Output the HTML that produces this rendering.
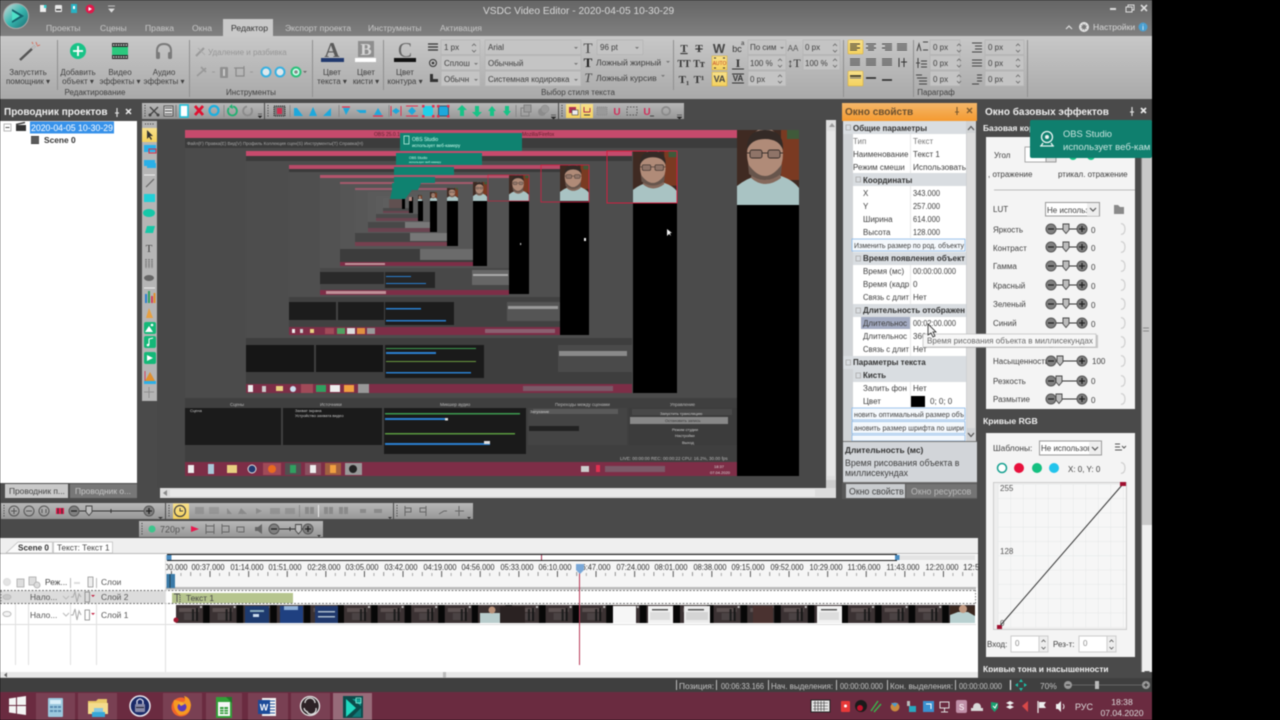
<!DOCTYPE html>
<html lang="ru"><head><meta charset="utf-8"><title>VSDC Video Editor</title>
<style>
html,body{margin:0;padding:0;background:#000;width:1280px;height:720px;overflow:hidden}
svg{display:block;filter:blur(.45px)}
text{font-family:"Liberation Sans","Noto Sans CJK SC",sans-serif;font-size:8px;fill:#3f3f3f}
.c{text-anchor:middle}
.b{font-weight:bold}
.w{fill:#f2f2f2}
.h{font-size:10px;font-weight:bold;fill:#eee}
.n{fill:#555}
.g{fill:#8d8d8d}
.s{font-size:8px;fill:#555}
.tl{font-size:8.6px;fill:#333;text-anchor:middle}
.st{font-size:8.4px;fill:#c4c4c4}
.box{fill:#c4c4c4;stroke:#b2b2b2;stroke-width:.7}
.sep{stroke:#8f8f8f;stroke-width:1}
.tbg{fill:url(#tb)}
</style></head><body>
<svg width="1280" height="720" viewBox="0 0 1280 720" xmlns="http://www.w3.org/2000/svg">
<defs>
<linearGradient id="title" x1="0" y1="0" x2="0" y2="1"><stop offset="0" stop-color="#656565"/><stop offset="1" stop-color="#808080"/></linearGradient>
<linearGradient id="rib" x1="0" y1="0" x2="0" y2="1"><stop offset="0" stop-color="#c8c8c8"/><stop offset="1" stop-color="#a9a9a9"/></linearGradient>
<linearGradient id="tb" x1="0" y1="0" x2="0" y2="1"><stop offset="0" stop-color="#b8b8b8"/><stop offset="1" stop-color="#979797"/></linearGradient>
<linearGradient id="org" x1="0" y1="0" x2="0" y2="1"><stop offset="0" stop-color="#f4b76a"/><stop offset="1" stop-color="#f59a30"/></linearGradient>
<linearGradient id="ylw" x1="0" y1="0" x2="0" y2="1"><stop offset="0" stop-color="#f8e08a"/><stop offset="1" stop-color="#f5d25e"/></linearGradient>
<linearGradient id="logo" x1="0" y1="0" x2="1" y2="1"><stop offset="0" stop-color="#d8d8d8"/><stop offset=".5" stop-color="#38b8b0"/><stop offset="1" stop-color="#1a6a70"/></linearGradient>
<pattern id="tick" patternUnits="userSpaceOnUse" x="171" y="571" width="38.6" height="8">
<rect x="0" y="0" width=".8" height="6" fill="#333"/><rect x="9.6" y="2" width=".7" height="3" fill="#888"/><rect x="19.3" y="1" width=".7" height="4" fill="#666"/><rect x="29" y="2" width=".7" height="3" fill="#888"/></pattern>
<pattern id="thumb" patternUnits="userSpaceOnUse" x="176" y="605" width="33.6" height="18">
<rect width="33.6" height="18" fill="#3b3233"/><rect x="3" y="3" width="20" height="4" fill="#5b5050"/><rect x="8" y="8" width="14" height="7" fill="#4b4344"/><rect x="16" y="4" width="2" height="12" fill="#1b1b1b"/><rect x="20" y="3" width="2" height="13" fill="#151515"/><rect x="27" y="0" width="6.6" height="18" fill="#070707"/><rect x="24" y="1" width="2" height="2" fill="#bbb"/></pattern>
<pattern id="grid" patternUnits="userSpaceOnUse" x="998" y="484" width="12.5" height="14.3"><rect width="12.5" height="14.3" fill="#f6f6f6"/><path d="M0 0V14.3M0 0H12.5" stroke="#dfe3e3" stroke-width=".7"/></pattern>

<symbol id="cam" viewBox="0 0 62 75" preserveAspectRatio="none">
<rect width="62" height="75" fill="#3f2a22"/><rect x="44" width="18" height="50" fill="#7a3a22"/><rect x="50" y="0" width="12" height="9" fill="#3f5a3a"/>
<path d="M0 75V56Q10 48 20 46L44 46Q56 50 62 58V75Z" fill="#a9c3c3"/>
<path d="M14 48Q28 60 44 48L42 36H16Z" fill="#85695c"/>
<ellipse cx="28" cy="24" rx="18" ry="26" fill="#b08b78"/>
<path d="M10 20Q9 0 28 0Q47 0 46 20Q42 9 28 9Q14 9 10 20Z" fill="#342a26"/>
<path d="M11 34Q28 58 45 34L44 44Q28 56 12 44Z" fill="#67554c"/>
<path d="M10 23H46" stroke="#3a302c" stroke-width=".9"/><rect x="13" y="20" width="12" height="8" rx="2" fill="#8f7468" stroke="#3a302c" stroke-width=".9"/><rect x="31" y="20" width="12" height="8" rx="2" fill="#8f7468" stroke="#3a302c" stroke-width=".9"/>
</symbol>

<symbol id="sld" viewBox="0 0 44 14" overflow="visible">
<path d="M7 7H38" stroke="#333" stroke-width="1"/>
<circle cx="6" cy="7" r="5" fill="#808080" stroke="#555"/><path d="M3 7H9" stroke="#222" stroke-width="1.3"/>
<circle cx="37" cy="7" r="5" fill="#808080" stroke="#555"/><path d="M34 7H40M37 4V10" stroke="#222" stroke-width="1.3"/>
</symbol>
<symbol id="th" viewBox="0 0 8 11"><path d="M1 1H7V7L4 10.500L1 7Z" fill="#bdbdbd" stroke="#444" stroke-width=".9"/></symbol>
<symbol id="ring" viewBox="0 0 10 14"><path d="M4 1.500Q8 2 8 7Q8 12 4 12.500" fill="none" stroke="#cfcfcf" stroke-width="1.200"/></symbol>
</defs>

<!-- base -->
<rect width="1152" height="720" fill="#4a4a4a"/>
<rect width="1152" height="36" fill="url(#title)"/>
<rect y="36" width="1152" height="63" fill="url(#rib)"/>

<!-- logo & QAT -->
<circle cx="16" cy="16" r="12.500" fill="url(#logo)" stroke="#aaa"/>
<path d="M12 9L24 16L12 23Z" fill="#14606a"/><path d="M12 11L20 16L12 21Z" fill="#4fe0c8"/>
<rect x="40" y="5" width="6" height="7" fill="#eee"/><rect x="44" y="5" width="2.500" height="3" fill="#3cc"/>
<rect x="55" y="5" width="7" height="7" rx="1" fill="#e8e8e8"/><rect x="56" y="9" width="5" height="1.500" fill="#444"/>
<rect x="71" y="4" width="6" height="9" fill="#27b3c4"/><rect x="73" y="6" width="2" height="3" fill="#fff"/>
<circle cx="90" cy="9" r="4.500" fill="#e0184a"/><path d="M88.500 7L92 9L88.500 11Z" fill="#fff"/>
<path d="M108 6H115M109 9H114L111.500 12Z" stroke="#ddd" fill="#ddd" stroke-width=".8"/>

<!-- tabs -->
<rect x="223" y="19" width="50" height="17" fill="#c9c9c9"/>
<text x="46" y="31" style="fill:#c8c8c8;font-size:8.600px">Проекты</text>
<text x="100" y="31" style="fill:#c8c8c8;font-size:8.600px">Сцены</text>
<text x="145" y="31" style="fill:#c8c8c8;font-size:8.600px">Правка</text>
<text x="192" y="31" style="fill:#c8c8c8;font-size:8.600px">Окна</text>
<text x="231" y="31" style="fill:#333;font-size:8.600px">Редактор</text>
<text x="285" y="31" style="fill:#c8c8c8;font-size:8.600px">Экспорт проекта</text>
<text x="368" y="31" style="fill:#c8c8c8;font-size:8.600px">Инструменты</text>
<text x="440" y="31" style="fill:#c8c8c8;font-size:8.600px">Активация</text>
<text x="483" y="14" style="fill:#d8d8d8;font-size:10.200px">VSDC Video Editor - 2020-04-05 10-30-29</text>
<!-- window ctrls -->
<path d="M1110 9H1116" stroke="#ddd" stroke-width="2"/>
<path d="M1126 7H1132V12H1126Z M1128 7V5H1134V10H1132" fill="none" stroke="#ddd"/>
<path d="M1141 5L1147 11M1147 5L1141 11" stroke="#ddd" stroke-width="1.600"/>
<path d="M1066 29L1069 26L1072 29" fill="none" stroke="#ddd" stroke-width="1.200"/>
<circle cx="1084" cy="27" r="3.500" fill="none" stroke="#e4e4e4" stroke-width="2.500" stroke-dasharray="1.800 .8"/>
<circle cx="1084" cy="27" r="4.200" fill="none" stroke="#e4e4e4" stroke-width="1.500"/>
<text x="1093" y="30" style="fill:#d8d8d8;font-size:8.600px">Настройки</text>
<circle cx="1143" cy="27" r="4.500" fill="#4a9fd0"/><text x="1143" y="30" class="c" style="fill:#fff;font-size:7px">i</text>

<!-- ribbon left -->
<path d="M20 60L35 46" stroke="#555" stroke-width="2.500"/><path d="M32 49L35 46" stroke="#bbb" stroke-width="2.500"/>
<path d="M36 42L37 45M40 45L37 46M32 42L33 44" stroke="#d07060" stroke-width="1"/>
<text x="28" y="75" class="c">Запустить</text><text x="28" y="84" class="c">помощник ▾</text>
<path d="M57.500 40V90" class="sep"/>
<circle cx="78" cy="51" r="8" fill="#18c387"/><path d="M73 51H83M78 46V56" stroke="#fff" stroke-width="1.800"/>
<text x="78" y="75" class="c">Добавить</text><text x="78" y="84" class="c">объект ▾</text>
<rect x="112" y="43" width="16" height="16" fill="#2e2e2e"/><rect x="112" y="47" width="16" height="8" fill="#2cc97e"/>
<path d="M113 45H127M113 57H127" stroke="#ccc" stroke-width="1.400" stroke-dasharray="1.500 1"/>
<text x="120" y="75" class="c">Видео</text><text x="120" y="84" class="c">эффекты ▾</text>
<path d="M157 54V51Q157 44 164 44Q171 44 171 51V54" fill="none" stroke="#7a7a7a" stroke-width="2"/>
<rect x="156" y="52" width="4" height="7" rx="1.500" fill="#7a7a7a"/><rect x="168" y="52" width="4" height="7" rx="1.500" fill="#7a7a7a"/>
<text x="164" y="75" class="c">Аудио</text><text x="164" y="84" class="c">эффекты ▾</text>
<text x="95" y="95" class="c">Редактирование</text>
<path d="M189.500 40V97" class="sep"/>

<!-- tools -->
<path d="M196 56L204 48" stroke="#999" stroke-width="2"/><path d="M198 48L205 55" stroke="#aaa"/>
<text x="208" y="55" style="fill:#969696">Удаление и разбивка</text>
<path d="M197 76L206 68M201 67L206 72" stroke="#999" stroke-width="1.800" fill="none"/>
<path d="M212 72H215" stroke="#999"/>
<rect x="220" y="67" width="8" height="11" rx="1" fill="#8f8f8f"/><rect x="223" y="69" width="2" height="7" fill="#ccc"/>
<rect x="236" y="68" width="8" height="8" fill="none" stroke="#888" stroke-width="1.200"/><path d="M234 68H238M244 66V70" stroke="#888"/>
<path d="M250 72H253" stroke="#999"/>
<circle cx="266" cy="72" r="4.500" fill="#dfe8ec" stroke="#38b0e0" stroke-width="2"/>
<circle cx="280" cy="72" r="4.500" fill="#dfe8ec" stroke="#38b0e0" stroke-width="2"/>
<circle cx="296" cy="72" r="4.500" fill="#cfe" stroke="#2cc07a" stroke-width="2"/><circle cx="296" cy="72" r="1.800" fill="#888"/>
<path d="M303 71L305 73L307 71" fill="#666"/>
<text x="251" y="95" class="c">Инструменты</text>
<path d="M312.500 40V97" class="sep"/>

<!-- colours -->
<text x="332" y="57" class="c" style="font-family:'Liberation Serif',serif;font-size:21px;font-weight:bold;fill:#5a5a5a">A</text>
<rect x="321" y="58" width="23" height="4" fill="#21396e"/>
<text x="332" y="75" class="c">Цвет</text><text x="332" y="84" class="c">текста ▾</text>
<rect x="358" y="41" width="16" height="16" fill="#8e8e8e"/>
<text x="366" y="55" class="c" style="font-family:'Liberation Serif',serif;font-size:17px;font-weight:bold;fill:#d4d4d4">B</text>
<rect x="355" y="58" width="21" height="4" fill="#fff"/>
<text x="366" y="75" class="c">Цвет</text><text x="366" y="84" class="c">кисти ▾</text>
<path d="M383.500 40V90" class="sep"/>
<text x="405" y="57" class="c" style="font-family:'Liberation Serif',serif;font-size:21px;fill:#666">C</text>
<rect x="394" y="58" width="22" height="4" fill="#111"/>
<text x="405" y="75" class="c">Цвет</text><text x="405" y="84" class="c">контура ▾</text>

<!-- line boxes -->
<path d="M428 44H438M428 47H438M428 50H438" stroke="#333" stroke-width="1.300"/>
<circle cx="433" cy="63" r="3.500" fill="none" stroke="#333"/><circle cx="433" cy="63" r="1.300" fill="#333"/>
<path d="M430 74V82H438V79H433V74Z" fill="#333"/>
<rect x="441" y="40" width="39" height="14.500" class="box"/><rect x="441" y="55.500" width="39" height="14.500" class="box"/><rect x="441" y="71" width="39" height="15" class="box"/>
<text x="444" y="50">1 px</text><text x="444" y="66">Сплош</text><text x="444" y="82">Обычн</text>
<path d="M472 46L474 44L476 46M472 50L474 52L476 50" fill="none" stroke="#666" stroke-width=".8"/>
<path d="M474 63H478L476 65Z M474 79H478L476 81Z" fill="#777"/>

<rect x="485" y="40" width="96" height="14.500" class="box"/><rect x="485" y="55.500" width="96" height="14.500" class="box"/><rect x="485" y="71" width="96" height="15" class="box"/>
<text x="488" y="50">Arial</text><text x="488" y="66">Обычный</text><text x="488" y="82">Системная кодировка</text>
<path d="M574 47H578L576 49Z M574 63H578L576 65Z M574 79H578L576 81Z" fill="#777"/>

<text x="588" y="53" class="c" style="font-family:'Liberation Serif',serif;font-size:15px;fill:#444">T</text>
<text x="588" y="67" class="c" style="font-family:'Liberation Serif',serif;font-size:13px;font-weight:bold;fill:#222">T</text>
<text x="588" y="82" class="c" style="font-family:'Liberation Serif',serif;font-size:13px;font-style:italic;fill:#444">T</text>
<rect x="597" y="40" width="46" height="14.500" class="box"/>
<text x="600" y="50">96 pt</text><path d="M635 47H639L637 49Z" fill="#777"/>
<text x="596" y="65.500" style="font-size:8.600px">Ложный жирный</text><path d="M666 61H670L668 63Z" fill="#777"/>
<text x="596" y="81" style="font-size:8.600px">Ложный курсив</text><path d="M661 75H665L663 77Z" fill="#777"/>
<text x="578" y="95" class="c">Выбор стиля текста</text>
<path d="M673.500 40V90" class="sep"/>
<text x="684" y="52" class="c" style="font-family:'Liberation Serif',serif;font-size:11px;font-weight:bold;fill:#333;text-decoration:underline">T</text>
<text x="699" y="52" class="c" style="font-family:'Liberation Serif',serif;font-size:11px;font-weight:bold;fill:#333;text-decoration:line-through">T</text>
<text x="684" y="67" class="c" style="font-family:'Liberation Serif',serif;font-size:10px;font-weight:bold;fill:#333">TT</text>
<text x="699" y="67" class="c" style="font-family:'Liberation Serif',serif;font-size:10px;font-weight:bold;fill:#333">Tт</text>
<text x="684" y="83" class="c" style="font-family:'Liberation Serif',serif;font-size:11px;font-weight:bold;fill:#333">T₁</text>
<text x="699" y="83" class="c" style="font-family:'Liberation Serif',serif;font-size:11px;font-weight:bold;fill:#333">T¹</text>
<text x="719" y="53" class="c" style="font-size:13px;font-weight:bold;fill:#444">W</text>
<rect x="712" y="56" width="15" height="14" fill="url(#ylw)" stroke="#d8b040" stroke-width=".6"/>
<text x="719.500" y="65" class="c" style="font-size:5px;fill:#c04020">AUTO</text><path d="M714 58H716M723 58H725M714 68H716M723 68H725" stroke="#333"/>
<rect x="712" y="72" width="15" height="14" fill="url(#ylw)" stroke="#d8b040" stroke-width=".6"/>
<text x="719.500" y="82" class="c" style="font-size:9px;font-weight:bold;fill:#444">VA</text>

<text x="737" y="52" class="c" style="font-size:9px;fill:#333">bc</text><text x="741" y="45" style="font-size:6px;fill:#333">a</text>
<text x="738" y="67" class="c" style="font-family:'Liberation Serif',serif;font-size:12px;font-weight:bold;fill:#333">I</text><path d="M732 69H744" stroke="#333"/>
<text x="738" y="81" class="c" style="font-size:8px;font-weight:bold;fill:#333">VA</text><path d="M732 83H744M732 74H744" stroke="#333"/>
<rect x="748" y="40" width="38" height="14.500" class="box"/><rect x="748" y="55.500" width="38" height="14.500" class="box"/><rect x="748" y="71" width="38" height="15" class="box"/>
<text x="750" y="50">По сим</text><text x="750" y="66">100 %</text><text x="750" y="82">0 px</text>
<path d="M780 47H784L782 49Z" fill="#777"/>
<path d="M778 61L780 59L782 61M778 65L780 67L782 65M778 77L780 75L782 77M778 81L780 83L782 81" fill="none" stroke="#666" stroke-width=".8"/>
<text x="793" y="51" class="c" style="font-size:8px;fill:#555">AA</text>
<text x="794" y="67" class="c" style="font-family:'Liberation Serif',serif;font-size:12px;fill:#333">↕T</text>
<rect x="803" y="40" width="37" height="14.500" class="box"/><rect x="803" y="55.500" width="37" height="14.500" class="box"/>
<text x="805" y="50">0 px</text><text x="805" y="66">100 %</text>
<path d="M833 46L835 44L837 46M833 50L835 52L837 50M833 61L835 59L837 61M833 65L835 67L837 65" fill="none" stroke="#666" stroke-width=".8"/>
<path d="M843.500 40V97" class="sep"/>

<!-- paragraph -->
<rect x="848" y="40" width="15" height="14" rx="1" fill="url(#ylw)" stroke="#d8b040" stroke-width=".6"/>
<rect x="848" y="71" width="15" height="15" rx="1" fill="url(#ylw)" stroke="#d8b040" stroke-width=".6"/>
<path d="M850 44H860M850 46H857M850 48H860M850 50H857" stroke="#333" stroke-width="1"/>
<path d="M866 44H876M868 46H874M866 48H876M868 50H874 M882 44H892M885 46H892M882 48H892M885 50H892 M897 44H907M897 46H907M897 48H907M897 50H907 M850 59H860M850 61H860M850 63H860M850 65H860M866 59H876M866 61H876M866 63H876M866 65H876M882 59H892M882 61H892M882 63H892M882 65H892" stroke="#444" stroke-width="1"/>
<path d="M899 58V67M904 58V67M901 62H907" stroke="#333"/>
<path d="M850 76H861M866 78H876M882 80H892" stroke="#222" stroke-width="1.500"/><path d="M850 78H861" stroke="#777"/>
<path d="M913.500 40V97" class="sep"/>
<path d="M917 51L919 44L921 51M923 42H928M923 50H928" fill="none" stroke="#444"/><path d="M921 67H927M921 64H927M921 61H927M916 63L920 63M918 58V68" stroke="#444" fill="none"/><path d="M917 78H927M919 81H927M919 84H927M916 75H922" stroke="#444"/>
<rect x="930" y="40" width="30" height="14.500" class="box"/><rect x="930" y="55.500" width="30" height="14.500" class="box"/><rect x="930" y="71" width="30" height="15" class="box"/>
<text x="933" y="50">0 px</text><text x="933" y="66">0 px</text><text x="933" y="82">0 px</text>
<path d="M961 46L963 44L965 46M961 50L963 52L965 50M961 61L963 59L965 61M961 65L963 67L965 65M961 77L963 75L965 77M961 81L963 83L965 81" fill="none" stroke="#666" stroke-width=".8" transform="translate(-4 0)"/>
<path d="M972 43H982M975 46H982M975 49H982M972 52H982M972 60H982M972 63H982M972 66H982M977 75H982M977 78H982M977 81H982M972 84H979" stroke="#444"/>
<rect x="985" y="40" width="39" height="14.500" class="box"/><rect x="985" y="55.500" width="39" height="14.500" class="box"/><rect x="985" y="71" width="39" height="15" class="box"/>
<text x="988" y="50">0 px</text><text x="988" y="66">0 px</text><text x="988" y="82">0 px</text>
<path d="M1016 46L1018 44L1020 46M1016 50L1018 52L1020 50M1016 61L1018 59L1020 61M1016 65L1018 67L1020 65M1016 77L1018 75L1020 77M1016 81L1018 83L1020 81" fill="none" stroke="#666" stroke-width=".8"/>
<text x="936" y="95" class="c">Параграф</text>
<path d="M1027.500 40V97" class="sep"/>

<!-- left panel -->
<text x="4" y="115" class="h">Проводник проектов</text>
<path d="M117 108V113M115 113H119M117 113V117" stroke="#ddd" stroke-width="1.200"/>
<path d="M126 109L131 114M131 109L126 114" stroke="#eee" stroke-width="1.500"/>
<rect y="121" width="137" height="362" fill="#fff"/>
<rect x="4" y="124" width="7" height="7" fill="#fff" stroke="#999" stroke-width=".7"/><path d="M5.500 127.500H9.500" stroke="#555"/>
<rect x="16" y="125" width="10" height="6" fill="#333"/><path d="M16 124.500L25 122.500" stroke="#444" stroke-width="1.500"/>
<rect x="30" y="121.500" width="84" height="12" fill="#3792ea"/>
<text x="31" y="131" style="fill:#fff;font-size:9px" textLength="82" lengthAdjust="spacingAndGlyphs">2020-04-05 10-30-29</text>
<rect x="31" y="136" width="8" height="8" fill="#444"/><path d="M31 138H39M31 140H39M31 142H39" stroke="#999" stroke-width=".5"/>
<text x="44" y="143" class="b" style="fill:#333;font-size:8.400px">Scene 0</text>
<rect y="483" width="137" height="17" fill="#4d4d4d"/>
<rect x="5" y="484" width="63" height="14" fill="#c9c9c9"/><text x="9" y="494" style="fill:#444;font-size:8.400px">Проводник п...</text>
<rect x="70" y="484" width="67" height="14" fill="#777"/><text x="75" y="494" style="fill:#c8c8c8;font-size:8.400px">Проводник о...</text>

<!-- vertical toolbar -->
<rect x="142" y="121" width="15" height="280" fill="#b5b5b5"/>
<path d="M145 124H155" stroke="#333" stroke-dasharray="1 1.500"/>
<rect x="142" y="128" width="15" height="14" fill="url(#ylw)"/><path d="M147 130L147 139L149 137L151 140L152 139L150 136H153Z" fill="#333"/>
<rect x="144" y="145" width="12" height="7" fill="#2ab0e8"/><rect x="149" y="149" width="7" height="4" fill="none" stroke="#d0304a"/>
<rect x="144" y="160" width="11" height="6" fill="#2ab0e8"/><rect x="147" y="163" width="9" height="5" fill="#2ab0e8"/>
<path d="M144 175H155" stroke="#eee"/><path d="M146 187L154 179" stroke="#666" stroke-width="1.200"/>
<rect x="144" y="194" width="11" height="8" fill="#22d0d8"/>
<ellipse cx="149" cy="213" rx="6" ry="4" fill="#16c8a8"/>
<path d="M145 233L147 226H155L153 233Z" fill="#16c8a8"/>
<text x="149" y="252" class="c" style="font-family:'Liberation Serif',serif;font-size:11px;fill:#444">T</text>
<path d="M146 259V268M149 259V268M152 259V268" stroke="#777" stroke-width="1.600" stroke-dasharray="1.500 .6"/>
<ellipse cx="149" cy="278" rx="5" ry="3" fill="#666"/>
<path d="M144 288H155" stroke="#eee"/>
<rect x="145" y="294" width="2" height="9" fill="#2a80d0"/><rect x="148" y="291" width="2" height="12" fill="#30a060"/><rect x="151" y="296" width="2" height="7" fill="#d04060"/><rect x="153.500" y="293" width="2" height="10" fill="#e09030"/>
<path d="M149 308L153 318H146Z" fill="#e8a040"/>
<rect x="144" y="322" width="12" height="12" rx="2" fill="#14b878"/><path d="M145 332L149 326L153 332Z" fill="#fff"/><circle cx="152" cy="325" r="1.300" fill="#fff"/>
<rect x="144" y="336" width="12" height="12" rx="2" fill="#14b878"/><path d="M149 345V339L153 338" stroke="#fff" fill="none"/><circle cx="148" cy="345" r="1.300" fill="#fff"/>
<rect x="144" y="352" width="12" height="12" rx="2" fill="#14b878"/><path d="M147 355V361L153 358Z" fill="#fff"/>
<path d="M145 382V371" stroke="#d04060"/><path d="M145 381L150 372L155 381Z" fill="#e09030"/><rect x="144" y="381" width="12" height="3" fill="#2ab0e8"/>
<path d="M149 387V398M144 392H154" stroke="#8f8f8f"/>

<!-- top toolbar -->
<rect x="142" y="103" width="122" height="16" class="tbg"/><rect x="265" y="103" width="293" height="16" class="tbg"/><rect x="559" y="103" width="125" height="16" class="tbg"/>
<path d="M145 105V117M268 105V117M562 105V117" stroke="#333" stroke-dasharray="1 1.600"/>
<path d="M150 115L158 107M158 115L150 107" stroke="#444" stroke-width="1.300"/><circle cx="150" cy="115" r="1.500" fill="#444"/><circle cx="158" cy="115" r="1.500" fill="#444"/>
<rect x="164" y="106" width="9" height="10" fill="#ddd" stroke="#555"/><path d="M165 108H172M165 111H172M165 114H172" stroke="#555"/>
<path d="M176 105V117" stroke="#777"/>
<rect x="180" y="105" width="8" height="12" fill="#fff" stroke="#22c0d8" stroke-width="1.600"/>
<path d="M195 106L203 115M203 106L195 115" stroke="#e01030" stroke-width="2.800"/>
<circle cx="214" cy="110.500" r="4.500" fill="none" stroke="#1ab0e0" stroke-width="2.200"/>
<path d="M224 105V117" stroke="#888"/>
<path d="M229 108A4.500 4.500 0 1 0 233 106.500" fill="none" stroke="#20b070" stroke-width="1.800"/><path d="M232 104L229 107L233 109Z" fill="#20b070"/>
<path d="M251 108A4.500 4.500 0 1 1 247 106.500" fill="none" stroke="#8a8a8a" stroke-width="1.800"/>
<path d="M258 114H262M258 116H262L260 118Z" fill="#222" stroke="#222" stroke-width=".5"/>
<rect x="274" y="106" width="11" height="10" fill="#777" stroke="#222" stroke-dasharray="1 1"/><rect x="277" y="108" width="5" height="6" fill="#d03050"/>
<path d="M290 105V117" stroke="#888"/>
<g fill="#1ea8dc"><path d="M294 108H297L303 116H294Z"/><path d="M313 107L317 116H309Z"/><path d="M331 108V116H323Z"/></g>
<path d="M339 105V117" stroke="#888"/>
<path d="M342 107H350" stroke="#e03050" stroke-width="1.300"/><path d="M343 108H350L346 115Z" fill="#1ea8dc"/>
<path d="M356 110H366V113H360Z" fill="#1ea8dc"/>
<path d="M373 116H383" stroke="#e03050" stroke-width="1.300"/><path d="M378 108L382 115H374Z" fill="#1ea8dc"/>
<path d="M389 105V117" stroke="#888"/>
<path d="M391 106V116M401 106V116" stroke="#e03050"/><path d="M392 111L396 108V114ZM400 111L396 108V114Z" fill="#1ea8dc"/>
<path d="M406 106H418M406 116H418" stroke="#e03050"/><path d="M412 107L408 111H416ZM412 115L408 111H416Z" fill="#1ea8dc"/>
<rect x="423" y="106" width="10" height="10" fill="#22d0e8"/><g fill="#e03050"><rect x="422" y="105" width="2.500" height="2.500"/><rect x="432" y="105" width="2.500" height="2.500"/><rect x="422" y="115" width="2.500" height="2.500"/><rect x="432" y="115" width="2.500" height="2.500"/></g>
<rect x="438.500" y="106" width="10" height="10" fill="#1ea8dc" stroke="#223" stroke-width=".6"/><g fill="#e03050"><rect x="437" y="105" width="2.500" height="2.500"/><rect x="447" y="105" width="2.500" height="2.500"/><rect x="437" y="115" width="2.500" height="2.500"/><rect x="447" y="115" width="2.500" height="2.500"/></g>
<g fill="#18c387"><path d="M462 105L467 110H464V116H460V110H457Z"/><path d="M477 117L482 112H479V106H475V112H472Z"/><path d="M492 106L496 111H494V116H490V111H488Z"/><path d="M507 116L511 111H509V106H505V111H503Z"/></g>
<path d="M516 105V117" stroke="#888"/>
<rect x="521" y="108" width="8" height="8" fill="none" stroke="#808080"/><rect x="524" y="105" width="7" height="7" fill="#9c9c9c" stroke="#808080"/>
<circle cx="542" cy="112" r="4" fill="#8c8c8c"/><circle cx="545" cy="109" r="4" fill="#9a9a9a" stroke="#888" stroke-width=".5"/>
<path d="M551 115H556M551 117H556L553.500 119Z" fill="#222" stroke="#222" stroke-width=".5"/>
<rect x="566" y="104" width="14" height="14" fill="url(#ylw)"/><rect x="581" y="104" width="12" height="14" fill="url(#ylw)"/>
<rect x="569" y="107" width="7" height="6" fill="#b03050"/><rect x="572" y="110" width="6" height="5" fill="#eee" stroke="#444" stroke-width=".6"/>
<path d="M584 107V112H590M590 108V112" stroke="#b03050" fill="none"/><path d="M584 115H590" stroke="#444"/>
<rect x="597" y="107" width="10" height="8" fill="#999" stroke="#888" stroke-dasharray="1 1"/>
<text x="617" y="115" class="c" style="font-size:10px;font-weight:bold;fill:#d0305a">U</text><path d="M613 116H621" stroke="#999"/>
<rect x="627" y="107" width="10" height="8" fill="none" stroke="#555" stroke-dasharray="1.500 1.500"/>
<text x="647" y="115" class="c" style="font-size:10px;font-weight:bold;fill:#d0305a">U</text><path d="M650 116H654" stroke="#444"/>
<circle cx="666" cy="111" r="4" fill="none" stroke="#8a8a8a" stroke-width="1.800"/>
<path d="M677 115H682M677 117H682L679.500 119Z" fill="#222" stroke="#222" stroke-width=".5"/>

<!-- preview scrollbars -->
<rect x="826" y="120" width="10" height="370" fill="#dedede"/><path d="M829 127L832 123L835 127Z" fill="#9a9a9a"/>
<rect x="827" y="131" width="8" height="345" fill="#e6e6e6"/><rect x="826" y="480" width="10" height="8" fill="#ccc"/>
<rect x="160" y="488" width="676" height="10" fill="#dcdcdc"/><path d="M163 493L167 490V496Z" fill="#888"/><rect x="170" y="489.500" width="645" height="7" fill="#e8e8e8"/>

<!-- PREVIEW -->
<rect x="157" y="120" width="669" height="368" fill="#484848"/>
<g>
<rect x="185" y="130" width="552" height="346" fill="#4b4b4b"/>
<!-- level 1 -->
<rect x="185" y="130" width="552" height="8" fill="#c64a6c"/>
<rect x="185" y="138" width="552" height="10" fill="#3c3c3c"/>
<text x="187" y="145" style="font-size:4.500px;fill:#aaa">Файл(F)   Правка(E)   Вид(V)   Профиль   Коллекция сцен(S)   Инструменты(T)   Справка(H)</text>
<text x="374" y="136" style="font-size:5px;fill:#60202e">OBS 25.0.1</text><text x="522" y="136" style="font-size:5px;fill:#60202e">Mozilla/Firefox</text>
<rect x="185" y="398" width="552" height="64" fill="#3f3f3f"/>
<rect x="185" y="408" width="96" height="37" fill="#1b1b1b"/><rect x="283" y="408" width="99" height="37" fill="#1b1b1b"/>
<rect x="384" y="408" width="142" height="46" fill="#1a1a1a"/><rect x="528" y="408" width="99" height="37" fill="#444"/>
<rect x="385" y="413" width="135" height="1.500" fill="#3d9a50"/><rect x="385" y="418" width="60" height="2" fill="#2a80d0"/><rect x="445" y="418" width="3" height="2.500" fill="#ddd"/>
<rect x="385" y="433" width="130" height="1.500" fill="#5a9a40"/><rect x="385" y="443" width="105" height="2" fill="#2a80d0"/><rect x="484" y="441" width="6" height="3" fill="#ddd"/>
<rect x="533" y="409" width="85" height="5" fill="#5a5a5a"/><rect x="529" y="426" width="50" height="5" fill="#222"/>
<rect x="629" y="408" width="108" height="37" fill="#3c3c3c"/><rect x="630" y="417" width="98" height="7" fill="#888"/><rect x="632" y="409" width="100" height="6" fill="#484848"/>
<text x="230" y="406" style="font-size:4.500px;fill:#bbb">Сцены</text><text x="320" y="406" style="font-size:4.500px;fill:#bbb">Источники</text><text x="440" y="406" style="font-size:4.500px;fill:#bbb">Микшер аудио</text><text x="555" y="406" style="font-size:4.500px;fill:#bbb">Переходы между сценами</text><text x="670" y="406" style="font-size:4.500px;fill:#bbb">Управление</text>
<text x="190" y="412" style="font-size:4px;fill:#ccc">Сцена</text><text x="295" y="412" style="font-size:4px;fill:#ccc">Захват экрана</text><text x="295" y="417" style="font-size:4px;fill:#ccc">Устройство захвата видео</text>
<text x="620" y="460" style="font-size:4.500px;fill:#bbb">LIVE: 00:00:00   REC: 00:00:22   CPU: 16.2%, 30.00 fps</text>
<text x="660" y="415" style="font-size:4px;fill:#ccc">Запустить трансляцию</text><text x="665" y="422" style="font-size:4px;fill:#333">Остановить запись</text><text x="672" y="431" style="font-size:4px;fill:#ccc">Режим студии</text><text x="675" y="437" style="font-size:4px;fill:#ccc">Настройки</text><text x="682" y="444" style="font-size:4px;fill:#ccc">Выход</text>
<text x="530" y="413" style="font-size:4px;fill:#ccc">Затухание</text>
<rect x="185" y="462" width="552" height="14" fill="#7d2e47"/>
<g>
<rect x="188" y="465" width="6" height="8" fill="#eee"/><rect x="208" y="464" width="6" height="10" fill="#a8c8d8"/><rect x="227" y="465" width="10" height="8" fill="#e8d080"/><circle cx="252" cy="469" r="4" fill="#223a70" stroke="#ddd"/><rect x="263" y="463" width="18" height="12" fill="#a04a58"/><circle cx="272" cy="469" r="4" fill="#e86a20"/><rect x="285" y="463" width="16" height="12" fill="#505050"/><rect x="290" y="465" width="6" height="8" fill="#30a060"/><rect x="305" y="463" width="16" height="12" fill="#8a5060"/><rect x="310" y="465" width="6" height="8" fill="#eee"/><rect x="325" y="463" width="16" height="12" fill="#a06040"/><rect x="330" y="465" width="6" height="8" fill="#f0a040"/><rect x="345" y="463" width="17" height="12" fill="#999"/><circle cx="353" cy="469" r="4" fill="#222"/>
<rect x="581" y="466" width="8" height="6" fill="#ccc"/><rect x="596" y="465" width="4" height="7" fill="#e03050"/><rect x="605" y="466" width="60" height="6" fill="#7a5a68"/><text x="714" y="468" style="font-size:4px;fill:#ddd">18:37</text><text x="710" y="474" style="font-size:4px;fill:#ddd">07.04.2020</text>
</g>
<use href="#cam" x="737" y="130" width="62" height="75"/><rect x="737" y="205" width="62" height="271" fill="#000"/>

<!-- level 2 -->
<rect x="246" y="151" width="386" height="239" fill="#4d4d4d"/>
<rect x="246" y="151" width="386" height="5" fill="#c64a6c"/><rect x="246" y="156" width="386" height="5" fill="#3a3a3a"/>
<rect x="246" y="338" width="386" height="46" fill="#3e3e3e"/>
<rect x="246" y="345" width="68" height="27" fill="#161616"/><rect x="316" y="345" width="67" height="27" fill="#161616"/><rect x="385" y="345" width="99" height="33" fill="#1a1a1a"/>
<rect x="386" y="352" width="50" height="2" fill="#2a80d0"/><rect x="386" y="372" width="85" height="1.500" fill="#2a80d0"/><rect x="386" y="348" width="90" height="1" fill="#3d9a50"/><rect x="386" y="361" width="90" height="1" fill="#6a9a40"/>
<rect x="558" y="345" width="74" height="27" fill="#4a4a4a"/><rect x="559" y="351" width="68" height="5" fill="#8a8a8a"/>
<rect x="246" y="384" width="386" height="9" fill="#7d2e47"/>
<rect x="248" y="385" width="5" height="7" fill="#eee"/><rect x="262" y="386" width="4" height="6" fill="#ccc"/><rect x="276" y="386" width="7" height="5" fill="#e8d080"/><circle cx="293" cy="389" r="3" fill="#cde"/><rect x="301" y="384" width="12" height="9" fill="#a04a58"/><rect x="316" y="385" width="10" height="7" fill="#30a060"/><rect x="330" y="385" width="10" height="7" fill="#eee"/><rect x="344" y="385" width="10" height="7" fill="#f0a040"/><rect x="358" y="384" width="11" height="9" fill="#999"/>
<rect x="523" y="386" width="90" height="5" fill="#7a5a68"/>
<use href="#cam" x="633" y="151" width="44" height="52"/>
<rect x="633" y="203" width="44" height="190" fill="#000"/>
<rect x="607" y="151" width="70" height="52" fill="none" stroke="#d02040" stroke-width="1"/>

<!-- level 3 -->
<rect x="289" y="165" width="271" height="160" fill="#4f4f4f"/>
<rect x="289" y="165" width="271" height="4" fill="#b94a68"/><rect x="289" y="169" width="271" height="3" fill="#3a3a3a"/>
<rect x="289" y="297" width="271" height="30" fill="#414141"/>
<rect x="289" y="302" width="47" height="18" fill="#1c1c1c"/><rect x="338" y="302" width="46" height="18" fill="#1c1c1c"/><rect x="385" y="302" width="69" height="23" fill="#1c1c1c"/>
<rect x="386" y="308" width="35" height="1.500" fill="#2a80d0"/><rect x="386" y="320" width="60" height="1.500" fill="#2a80d0"/>
<rect x="507" y="302" width="53" height="19" fill="#555"/><rect x="508" y="306" width="50" height="3" fill="#999"/>
<rect x="289" y="327" width="271" height="8" fill="#7d2e47"/>
<rect x="292" y="329" width="3" height="4" fill="#eee"/><rect x="300" y="329" width="3" height="4" fill="#ccc"/><rect x="310" y="329" width="4" height="4" fill="#e8d080"/><rect x="325" y="328" width="9" height="6" fill="#a04a58"/><rect x="337" y="328" width="8" height="6" fill="#50a060"/><rect x="347" y="328" width="8" height="6" fill="#ddd"/><rect x="357" y="328" width="8" height="6" fill="#e09040"/><rect x="367" y="328" width="8" height="6" fill="#999"/><rect x="485" y="329" width="70" height="4" fill="#8a6070"/>
<use href="#cam" x="560" y="165" width="29" height="36"/><rect x="560" y="201" width="29" height="134" fill="#000"/>
<rect x="541" y="165" width="48" height="37" fill="none" stroke="#d02040" stroke-width=".8"/>
<rect x="584" y="238" width="2" height="3" fill="#eee"/>

<!-- level 4 -->
<rect x="320" y="175" width="189" height="119" fill="#525252"/>
<rect x="320" y="175" width="189" height="3" fill="#b4546c"/>
<rect x="320" y="268" width="189" height="22" fill="#484848"/>
<rect x="320" y="272" width="64" height="12" fill="#2a2a2a"/><rect x="385" y="272" width="50" height="16" fill="#262626"/><rect x="386" y="276" width="25" height="1" fill="#2a80d0"/><rect x="386" y="283" width="40" height="1" fill="#2a80d0"/>
<rect x="472" y="270" width="37" height="15" fill="#666"/><rect x="473" y="274" width="35" height="2" fill="#aaa"/>
<rect x="320" y="290" width="189" height="5" fill="#7d2e47"/><rect x="326" y="291" width="60" height="3" fill="#c09098"/>
<use href="#cam" x="509" y="175" width="20" height="26"/><rect x="509" y="201" width="20" height="93" fill="#000"/>
<rect x="488" y="175" width="41" height="26" fill="none" stroke="#d02040" stroke-width=".6"/>
<rect x="520" y="243" width="1.200" height="2" fill="#bbb"/>

<!-- level 5 -->
<rect x="340" y="182" width="133" height="84" fill="#555"/>
<rect x="340" y="182" width="133" height="2" fill="#a45a6c"/>
<rect x="340" y="249" width="133" height="13" fill="#3c3c3c"/><rect x="420" y="249" width="53" height="11" fill="#6b6b6b"/>
<rect x="340" y="262" width="133" height="4" fill="#7d2e47"/><rect x="345" y="263" width="40" height="2" fill="#c09098"/>
<use href="#cam" x="473" y="182" width="14" height="19"/><rect x="473" y="201" width="14" height="65" fill="#000"/>

<!-- level 6 -->
<rect x="355" y="188" width="92" height="58" fill="#575757"/>
<rect x="355" y="188" width="92" height="2" fill="#9a5a6c"/>
<rect x="355" y="233" width="92" height="9" fill="#444"/><rect x="410" y="233" width="37" height="8" fill="#777"/>
<rect x="355" y="242" width="92" height="4" fill="#76404f"/>
<use href="#cam" x="447" y="188" width="11" height="13"/><rect x="447" y="201" width="11" height="45" fill="#000"/>

<!-- level 7 -->
<rect x="368" y="192" width="62" height="40" fill="#5a5a5a"/>
<rect x="368" y="222" width="62" height="6" fill="#484848"/><rect x="405" y="222" width="25" height="6" fill="#787878"/>
<rect x="368" y="228" width="62" height="4" fill="#6a4450"/>
<use href="#cam" x="430" y="192" width="7" height="9"/><rect x="430" y="201" width="7" height="31" fill="#000"/>
<!-- level 8 -->
<rect x="376" y="196" width="42" height="26" fill="#5c5c5c"/><rect x="376" y="214" width="42" height="4" fill="#4a4a4a"/><rect x="376" y="218" width="42" height="3" fill="#6a4450"/>
<use href="#cam" x="418" y="195" width="4" height="6"/><rect x="418" y="201" width="5" height="20" fill="#000"/>
<rect x="383" y="198" width="26" height="15" fill="#5e5e5e"/><rect x="383" y="208" width="26" height="3" fill="#4a4a4a"/><rect x="383" y="211" width="26" height="2" fill="#6a4450"/>
<rect x="409" y="197" width="4" height="16" fill="#000"/><rect x="409" y="197" width="3" height="4" fill="#b08880"/>
<rect x="389" y="199" width="13" height="9" fill="#605050"/><rect x="402" y="199" width="3" height="10" fill="#000"/>

<!-- notification stack -->
<rect x="400" y="133" width="122" height="18" fill="#0f8270"/><rect x="396" y="153" width="86" height="12" fill="#0f8270"/><rect x="394" y="167" width="60" height="8" fill="#0f8270"/><rect x="394" y="177" width="41" height="6" fill="#0f8270"/><path d="M392 183H421L418 190H392Z" fill="#0f8270"/><path d="M392 190H412L405 199H390Z" fill="#0f8270"/>
<text x="412" y="141" style="font-size:5px;fill:#cfe">OBS Studio</text><text x="412" y="147" style="font-size:4.500px;fill:#cfe">использует веб-камеру</text>
<text x="409" y="159" style="font-size:3.500px;fill:#cfe">OBS Studio</text><text x="409" y="163" style="font-size:3px;fill:#cfe">использует веб-камеру</text>
<rect x="404" y="136" width="5" height="8" fill="none" stroke="#cfe" stroke-width=".7"/>
<path d="M667 229V236L669 234L671 236L670 233H672Z" fill="#eee"/>
</g>

<!-- property panel -->
<rect x="842" y="103" width="135" height="18" fill="url(#org)"/>
<text x="845" y="115" style="font-size:10px;font-weight:bold;fill:#6a5030">Окно свойств</text>
<path d="M957 107V112M955 112H959M957 112V115" stroke="#7a5a30" stroke-width="1.100"/>
<path d="M967 108L972 113M972 108L967 113" stroke="#7a5a30" stroke-width="1.300"/>
<rect x="843" y="121" width="133" height="320" fill="#d0d3d6"/>
<rect x="853" y="121" width="113" height="320" fill="#fff"/>
<rect x="966" y="121" width="10" height="320" fill="#cfd1d3"/><rect x="967" y="133" width="8" height="295" fill="#dcdcdc"/>
<path d="M968 130L971 126.500L974 130" fill="none" stroke="#555" stroke-width="1.200"/><path d="M968 433L971 436.500L974 433" fill="none" stroke="#555" stroke-width="1.200"/>
<g fill="#d9dde1">
<rect x="843" y="121" width="123" height="13"/><rect x="853" y="173" width="113" height="13"/><rect x="853" y="252" width="113" height="13"/><rect x="853" y="304" width="113" height="13"/><rect x="843" y="356" width="123" height="13"/><rect x="853" y="369" width="113" height="13"/>
</g>
<path d="M910.500 134V173M910.500 186V238M910.500 265V304M910.500 317V356M910.500 382V408" stroke="#e8e8e8"/>
<g fill="none" stroke="#aaa" stroke-width=".8"><path d="M846 125V130H850.500V125Z"/><path d="M856 177V182H860.500V177Z"/><path d="M856 256V261H860.500V256Z"/><path d="M856 308V313H860.500V308Z"/><path d="M846 360V365H850.500V360Z"/><path d="M856 373V378H860.500V373Z"/></g>
<text x="853" y="131" class="b" style="fill:#333">Общие параметры</text>
<text x="853" y="144" style="fill:#777">Тип</text><text x="913" y="144" style="fill:#777">Текст</text>
<text x="853" y="157">Наименование</text><text x="913" y="157">Текст 1</text>
<text x="853" y="170">Режим смеши</text><text x="913" y="170" textLength="53" lengthAdjust="spacingAndGlyphs">Использовать</text>
<text x="863" y="183" class="b" style="fill:#333">Координаты</text>
<text x="863" y="196">X</text><text x="913" y="196" textLength="27" lengthAdjust="spacingAndGlyphs">343.000</text>
<text x="863" y="209">Y</text><text x="913" y="209" textLength="27" lengthAdjust="spacingAndGlyphs">257.000</text>
<text x="863" y="222">Ширина</text><text x="913" y="222" textLength="27" lengthAdjust="spacingAndGlyphs">614.000</text>
<text x="863" y="235">Высота</text><text x="913" y="235" textLength="27" lengthAdjust="spacingAndGlyphs">128.000</text>
<rect x="852" y="239" width="113" height="12" fill="#f4f8fc" stroke="#8ab8e8" stroke-width=".8"/>
<text x="854" y="248" style="font-size:7.600px" textLength="110" lengthAdjust="spacingAndGlyphs">Изменить размер по род. объекту</text>
<text x="863" y="261" class="b" style="fill:#333" textLength="102" lengthAdjust="spacingAndGlyphs">Время появления объект</text>
<text x="863" y="274">Время (мс)</text><text x="913" y="274" textLength="43" lengthAdjust="spacingAndGlyphs">00:00:00.000</text>
<text x="863" y="287">Время (кадр</text><text x="913" y="287">0</text>
<text x="863" y="300" textLength="46" lengthAdjust="spacingAndGlyphs">Связь с длит</text><text x="913" y="300">Нет</text>
<text x="863" y="313" class="b" style="fill:#333" textLength="102" lengthAdjust="spacingAndGlyphs">Длительность отображен</text>
<rect x="861" y="317" width="49" height="12" fill="#a3abc2"/>
<text x="863" y="326">Длительнос</text><text x="913" y="326" textLength="43" lengthAdjust="spacingAndGlyphs">00:02:00.000</text>
<text x="863" y="339">Длительнос</text><text x="913" y="339">360</text>
<text x="863" y="352" textLength="46" lengthAdjust="spacingAndGlyphs">Связь с длит</text><text x="913" y="352">Нет</text>
<text x="853" y="365" class="b" style="fill:#333">Параметры текста</text>
<text x="863" y="378" class="b" style="fill:#333">Кисть</text>
<text x="863" y="391">Залить фон</text><text x="913" y="391">Нет</text>
<text x="863" y="404">Цвет</text><rect x="911" y="396" width="14" height="11" fill="#000"/><text x="930" y="404">0; 0; 0</text>
<rect x="852" y="408" width="113" height="12" fill="#f4f8fc" stroke="#8ab8e8" stroke-width=".8"/>
<text x="854" y="417" style="font-size:7.600px" textLength="110" lengthAdjust="spacingAndGlyphs">новить оптимальный размер объ</text>
<rect x="852" y="421.500" width="113" height="12" fill="#f4f8fc" stroke="#8ab8e8" stroke-width=".8"/>
<text x="854" y="430.500" style="font-size:7.600px" textLength="110" lengthAdjust="spacingAndGlyphs">ановить размер шрифта по шири</text>
<rect x="852" y="435" width="113" height="6" fill="#f4f8fc" stroke="#8ab8e8" stroke-width=".8"/>
<rect x="843" y="441" width="134" height="42" fill="#d2d5d9"/>
<rect x="843" y="441" width="134" height="1" fill="#777"/><rect x="843" y="482" width="134" height="1" fill="#777"/>
<text x="845" y="453" class="b" style="font-size:8.400px;fill:#333">Длительность (мс)</text>
<text x="845" y="466" style="font-size:8.800px">Время рисования объекта в</text><text x="845" y="476" style="font-size:8.800px">миллисекундах</text>
<rect x="842" y="483" width="135" height="16" fill="#585858"/>
<rect x="846" y="484" width="59" height="14" fill="#c9cccf"/><text x="849" y="494.500" style="font-size:8.800px">Окно свойств</text>
<rect x="906" y="484" width="71" height="14" fill="#747474"/><text x="911" y="494.500" style="font-size:8.800px;fill:#bbb">Окно ресурсов</text>

<!-- effects panel -->
<text x="985" y="115" class="h">Окно базовых эффектов</text>
<path d="M1132 107V112M1130 112H1134M1132 112V116" stroke="#ddd" stroke-width="1.200"/>
<path d="M1141 108L1146 113M1146 108L1141 113" stroke="#eee" stroke-width="1.600"/>
<rect x="1142" y="121" width="10" height="404" fill="#c9c9c9"/><rect x="1142" y="525" width="10" height="153" fill="#f0f0f0"/>
<rect x="1141" y="121" width="1" height="557" fill="#888"/>
<path d="M1143 328H1149M1143 331H1149" stroke="#888"/>
<text x="983" y="131" class="b w" style="font-size:8.400px">Базовая кор</text>
<rect x="986" y="137" width="149" height="272" fill="#f4f4f4"/>
<text x="994" y="158">Угол</text>
<rect x="1025" y="147" width="31" height="15" fill="#fff" stroke="#aaa"/><rect x="1046" y="147" width="10" height="15" fill="#ddd" stroke="#999"/>
<circle cx="1073" cy="156" r="4" fill="#18c387"/><circle cx="1091" cy="156" r="4" fill="#18c387"/>
<text x="988" y="177">, отражение</text><text x="1058" y="177">ртикал. отражение</text>
<path d="M994 190H1135" stroke="#bbb"/>
<text x="993" y="212">LUT</text>
<rect x="1045.500" y="202.500" width="54" height="13.500" fill="#fff" stroke="#999"/>
<text x="1047" y="213">Не использ</text><rect x="1087" y="203" width="12" height="13" fill="#eee"/>
<path d="M1090 208L1093 211L1096 208" fill="none" stroke="#555" stroke-width="1.200"/>
<path d="M1114 205H1118L1120 207H1124V214H1114Z" fill="#8a8a8a"/>
<!-- sliders -->
<g>
<text x="993" y="232.500">Яркость</text><use href="#sld" x="1045" y="222" width="44" height="14"/><use href="#th" x="1062" y="223" width="8" height="11"/><text x="1091" y="233">0</text><use href="#ring" x="1117" y="222" width="10" height="14"/>
<text x="993" y="251">Контраст</text><use href="#sld" x="1045" y="240" width="44" height="14"/><use href="#th" x="1062" y="241" width="8" height="11"/><text x="1091" y="251">0</text><use href="#ring" x="1117" y="240" width="10" height="14"/>
<text x="993" y="269">Гамма</text><use href="#sld" x="1045" y="259" width="44" height="14"/><use href="#th" x="1062" y="260" width="8" height="11"/><text x="1091" y="270">0</text><use href="#ring" x="1117" y="259" width="10" height="14"/>
<text x="993" y="288.500">Красный</text><use href="#sld" x="1045" y="278" width="44" height="14"/><use href="#th" x="1062" y="279" width="8" height="11"/><text x="1091" y="289">0</text><use href="#ring" x="1117" y="278" width="10" height="14"/>
<text x="993" y="307">Зеленый</text><use href="#sld" x="1045" y="297" width="44" height="14"/><use href="#th" x="1062" y="298" width="8" height="11"/><text x="1091" y="308">0</text><use href="#ring" x="1117" y="297" width="10" height="14"/>
<text x="993" y="326">Синий</text><use href="#sld" x="1045" y="316" width="44" height="14"/><use href="#th" x="1062" y="317" width="8" height="11"/><text x="1091" y="327">0</text><use href="#ring" x="1117" y="316" width="10" height="14"/>
<use href="#sld" x="1045" y="335" width="44" height="14"/><use href="#ring" x="1117" y="335" width="10" height="14"/>
<text x="993" y="364">Насыщенность</text><use href="#sld" x="1045" y="354" width="44" height="14"/><use href="#th" x="1056" y="355" width="8" height="11"/><text x="1092" y="364">100</text><use href="#ring" x="1117" y="354" width="10" height="14"/>
<text x="993" y="384">Резкость</text><use href="#sld" x="1045" y="374" width="44" height="14"/><use href="#th" x="1055" y="375" width="8" height="11"/><text x="1091" y="384">0</text><use href="#ring" x="1117" y="374" width="10" height="14"/>
<text x="993" y="402">Размытие</text><use href="#sld" x="1045" y="392" width="44" height="14"/><use href="#th" x="1055" y="393" width="8" height="11"/><text x="1091" y="403">0</text><use href="#ring" x="1117" y="392" width="10" height="14"/>
</g>
<!-- tooltip -->
<rect x="924" y="335" width="174" height="13" fill="#999" opacity=".5"/>
<rect x="923" y="334" width="173" height="13" fill="#f7f7f7" stroke="#bbb" stroke-width=".7"/>
<text x="927" y="343.500" style="font-size:8.200px;fill:#666" textLength="166" lengthAdjust="spacingAndGlyphs">Время рисования объекта в миллисекундах</text>
<path d="M928 324L928 335L931 333L933 337L935 336L933 332L936 332Z" fill="#f4f4f4" stroke="#222" stroke-width=".8"/>

<!-- RGB -->
<text x="983" y="424" class="b w" style="font-size:8.600px">Кривые RGB</text>
<rect x="986" y="433" width="149" height="224" fill="#f4f4f4"/>
<text x="993" y="451" style="font-size:8.400px">Шаблоны:</text>
<rect x="1039.500" y="441" width="62" height="14" fill="#fff" stroke="#999"/>
<text x="1041" y="451">Не использов</text><rect x="1089" y="442" width="12" height="12.500" fill="#eee"/>
<path d="M1092 447L1095 450L1098 447" fill="none" stroke="#555" stroke-width="1.200"/>
<path d="M1115 444H1120M1115 447H1120M1115 450H1122M1122 446L1124 448L1126 446" fill="none" stroke="#555"/>
<circle cx="1002" cy="468" r="4.500" fill="#fff" stroke="#16a090" stroke-width="1.500"/>
<circle cx="1019" cy="468" r="5" fill="#e8103c"/><circle cx="1037" cy="468" r="5" fill="#14c080"/><circle cx="1054" cy="468" r="5" fill="#22c4ec"/>
<text x="1068" y="472">X: 0, Y: 0</text>
<use href="#ring" x="1117" y="461" width="10" height="14"/>
<rect x="993.500" y="482.500" width="133" height="147" fill="#eee" stroke="#ccc"/>
<rect x="998" y="484" width="128" height="143" fill="url(#grid)"/>
<path d="M999 627L1123 484" stroke="#333" stroke-width="1"/>
<rect x="997" y="625" width="5" height="4" fill="#a01030"/><rect x="1120" y="482" width="6" height="4" fill="#a01030"/>
<text x="1000" y="491" class="s">255</text><text x="1000" y="554" class="s">128</text><text x="1000" y="626" class="s">0</text>
<text x="987" y="647">Вход:</text>
<rect x="1011" y="636" width="37" height="16" fill="#fff" stroke="#ccc"/><rect x="1039" y="636" width="9" height="16" fill="#eee" stroke="#ccc"/><text x="1015" y="646" class="n g">0</text>
<path d="M1041.500 642L1043.500 640L1045.500 642M1041.500 647L1043.500 649L1045.500 647" fill="none" stroke="#555" stroke-width=".8"/>
<text x="1053" y="647">Рез-т:</text>
<rect x="1079" y="636" width="37" height="16" fill="#fff" stroke="#ccc"/><rect x="1107" y="636" width="9" height="16" fill="#eee" stroke="#ccc"/><text x="1083" y="646" class="n g">0</text>
<path d="M1109.500 642L1111.500 640L1113.500 642M1109.500 647L1111.500 649L1113.500 647" fill="none" stroke="#555" stroke-width=".8"/>
<text x="983" y="672" class="b w" style="font-size:8.400px">Кривые тона и насыщенности</text>
<path d="M1144 671L1147 674L1150 671Z" fill="#555"/>

<!-- OBS notification -->
<rect x="1030" y="120" width="122" height="38" rx="2" fill="#0f7f6e"/>
<circle cx="1047" cy="137" r="5.500" fill="none" stroke="#e8f4f2" stroke-width="1.300"/><circle cx="1047" cy="137" r="2" fill="#e8f4f2"/>
<path d="M1040 146H1054M1043 143L1041 146M1051 143L1053 146" stroke="#e8f4f2" stroke-width="1.300"/>
<text x="1063" y="137" style="font-size:9.400px;fill:#c8e4de">OBS Studio</text>
<text x="1063" y="150" style="font-size:9.600px;fill:#c8e4de">использует веб-кам</text>

<!-- timeline toolbars -->
<rect x="1" y="503" width="164" height="16" class="tbg"/><rect x="166" y="503" width="227" height="16" class="tbg"/><rect x="394" y="503" width="79" height="16" class="tbg"/>
<rect x="139" y="521" width="184" height="16" class="tbg"/>
<path d="M4 505V517M169 505V517M397 505V517M142 523V535" stroke="#333" stroke-dasharray="1 1.600"/>
<g fill="none" stroke="#555" stroke-width="1"><circle cx="14" cy="511" r="5"/><path d="M11 511H17M14 508V514"/><circle cx="29" cy="511" r="5"/><path d="M26 511H32"/><circle cx="44" cy="511" r="5"/><path d="M42 509V513M46 509V513"/></g>
<path d="M56 508H64V514H56Z" fill="#e0184a"/><path d="M58 508V514M62 508V514" stroke="#333"/>
<path d="M74 511H150" stroke="#333"/>
<circle cx="74" cy="511" r="5" fill="#808080" stroke="#555"/><path d="M71 511H77" stroke="#222" stroke-width="1.300"/>
<circle cx="149" cy="511" r="5" fill="#808080" stroke="#555"/><path d="M146 511H152M149 508V514" stroke="#222" stroke-width="1.300"/>
<use href="#th" x="85" y="505" width="8" height="11"/><path d="M111 509V513" stroke="#333"/>
<path d="M158 515H163M158 517H163L160.500 519Z" fill="#333"/>
<rect x="173" y="503.500" width="16" height="15.500" fill="url(#ylw)"/><circle cx="180" cy="511" r="5.500" fill="none" stroke="#444" stroke-width="1.200"/><path d="M180 508V511H183" stroke="#444" fill="none"/>
<g fill="#8a8a8a"><path d="M195 507H204V514H195Z" opacity=".7"/><path d="M209 507H219V514H209Z" opacity=".6"/><path d="M227 508L232 514H227Z"/><path d="M241 508L247 514H238Z"/><path d="M256 508L262 511L256 514Z"/><path d="M270 508H280V514H270Z" opacity=".7"/><path d="M285 508H295V514H285Z" opacity=".7"/><rect x="305" y="507" width="4" height="7"/><rect x="310" y="507" width="4" height="7"/><rect x="324" y="507" width="4" height="7"/><rect x="329" y="507" width="4" height="7"/><rect x="339" y="507" width="4" height="7"/><rect x="344" y="507" width="4" height="7"/><path d="M360 509H366V513H360Z"/><path d="M374 509H382V513H374Z"/></g>
<path d="M299.500 505V517" stroke="#888"/><path d="M318.500 505V517" stroke="#eee"/>
<path d="M388 515H392M388 517H392L390 519Z" fill="#333"/>
<g fill="none" stroke="#666"><path d="M405 506V516M405 508H411V512H405"/><path d="M426 506V516M426 508H420V512H426"/><path d="M439 514L444 511H447"/><path d="M459 516V506M455 511H464"/></g>
<path d="M467 515H471M467 517H471L469 519Z" fill="#333"/>
<circle cx="152" cy="529" r="3.500" fill="#3cc58c"/>
<text x="160" y="532.500" style="font-size:9px;fill:#555">720p</text><path d="M181 527H185L183 530Z" fill="#777"/>
<path d="M191 526L199 529L191 532Z" fill="#e8184c"/>
<rect x="206" y="526" width="8" height="6" fill="none" stroke="#666"/><path d="M206 524V534M214 524V534" stroke="#666"/>
<path d="M222 526H229V532H222ZM222 524V534" fill="none" stroke="#666"/>
<path d="M237 532V527H244V532H238" fill="none" stroke="#666"/>
<path d="M255 527H258L262 524V534L258 531H255Z" fill="#666"/>
<path d="M275 529H310" stroke="#333"/>
<circle cx="274" cy="529" r="5" fill="#808080" stroke="#555"/><path d="M271 529H277" stroke="#222" stroke-width="1.300"/>
<circle cx="308" cy="529" r="5" fill="#808080" stroke="#555"/><path d="M305 529H311M308 526V532" stroke="#222" stroke-width="1.300"/>
<use href="#th" x="294.500" y="523.500" width="8" height="11"/><path d="M290 527V531" stroke="#333"/>
<path d="M317 533H321M317 535H321L319 537Z" fill="#333"/>

<!-- timeline -->
<rect y="538" width="978" height="140" fill="#f6f6f6"/>
<rect x="978" y="538" width="2" height="140" fill="#4a4a4a"/>
<rect y="538" width="978" height="16" fill="#efefef"/>
<path d="M6 553L18 542H52.500V553Z" fill="#fafafa" stroke="#bbb" stroke-width=".7"/>
<rect x="53.500" y="542" width="59" height="11" fill="#fff" stroke="#bbb" stroke-width=".7"/>
<text x="18" y="550.500" class="b" style="font-size:8.200px;fill:#333">Scene 0</text><text x="57" y="550.500" style="font-size:8.200px;fill:#444">Текст: Текст 1</text>
<rect y="553" width="978" height="1" fill="#bbb"/>
<rect y="554" width="978" height="124" fill="#fff"/>
<rect x="166" y="555" width="812" height="33" fill="#f5f5f5"/>
<rect x="167" y="555" width="730" height="5" fill="#fff"/><rect x="897" y="555" width="78" height="5" fill="#e4e4e4"/>
<path d="M167 554.500H897M167 560.500H897" stroke="#1a1a1a" stroke-width="1.100"/>
<rect x="166.500" y="555" width="5" height="5" fill="#4a8cc0"/><rect x="895" y="555" width="4.500" height="5" fill="#4a8cc0"/>
<path d="M541.500 555V560" stroke="#a03050"/>
<text x="171" y="570" class="tl" textLength="33" lengthAdjust="spacingAndGlyphs">00:00.000</text><text x="208" y="570" class="tl" textLength="33" lengthAdjust="spacingAndGlyphs">00:37.000</text><text x="247" y="570" class="tl" textLength="33" lengthAdjust="spacingAndGlyphs">01:14.000</text><text x="285" y="570" class="tl" textLength="33" lengthAdjust="spacingAndGlyphs">01:51.000</text><text x="324" y="570" class="tl" textLength="33" lengthAdjust="spacingAndGlyphs">02:28.000</text><text x="362" y="570" class="tl" textLength="33" lengthAdjust="spacingAndGlyphs">03:05.000</text><text x="401" y="570" class="tl" textLength="33" lengthAdjust="spacingAndGlyphs">03:42.000</text><text x="440" y="570" class="tl" textLength="33" lengthAdjust="spacingAndGlyphs">04:19.000</text><text x="478" y="570" class="tl" textLength="33" lengthAdjust="spacingAndGlyphs">04:56.000</text><text x="517" y="570" class="tl" textLength="33" lengthAdjust="spacingAndGlyphs">05:33.000</text><text x="555" y="570" class="tl" textLength="33" lengthAdjust="spacingAndGlyphs">06:10.000</text><text x="594" y="570" class="tl" textLength="33" lengthAdjust="spacingAndGlyphs">06:47.000</text><text x="633" y="570" class="tl" textLength="33" lengthAdjust="spacingAndGlyphs">07:24.000</text><text x="671" y="570" class="tl" textLength="33" lengthAdjust="spacingAndGlyphs">08:01.000</text><text x="710" y="570" class="tl" textLength="33" lengthAdjust="spacingAndGlyphs">08:38.000</text><text x="748" y="570" class="tl" textLength="33" lengthAdjust="spacingAndGlyphs">09:15.000</text><text x="787" y="570" class="tl" textLength="33" lengthAdjust="spacingAndGlyphs">09:52.000</text><text x="826" y="570" class="tl" textLength="33" lengthAdjust="spacingAndGlyphs">10:29.000</text><text x="864" y="570" class="tl" textLength="33" lengthAdjust="spacingAndGlyphs">11:06.000</text><text x="903" y="570" class="tl" textLength="33" lengthAdjust="spacingAndGlyphs">11:43.000</text><text x="942" y="570" class="tl" textLength="33" lengthAdjust="spacingAndGlyphs">12:20.000</text><text x="963" y="570" style="font-size:8.600px;fill:#333">12:5</text>
<rect x="171" y="571" width="805" height="8" fill="url(#tick)"/>
<rect x="166" y="587" width="810" height="2.500" fill="#b9b9b9"/>
<rect x="166.500" y="574" width="8.500" height="14" fill="#3a7aa8"/><path d="M170 574V588" stroke="#245"/>
<!-- layer header -->
<rect y="555" width="166" height="35" fill="#fff"/>
<circle cx="7" cy="582" r="3.500" fill="#e4e4e4" stroke="#ddd"/>
<rect x="17" y="579" width="7" height="8" fill="#ddd" stroke="#aaa" stroke-width=".8"/>
<rect x="29" y="577" width="7" height="8" fill="#ddd" stroke="#aaa" stroke-width=".8"/><circle cx="37" cy="585" r="3" fill="#ddd" stroke="#aaa" stroke-width=".8"/>
<text x="45" y="585" style="fill:#444;font-size:8.400px">Реж...</text>
<path d="M70.500 578V588M96.500 578V588" stroke="#bbb"/>
<path d="M74 583H80" stroke="#ddd" stroke-width="2"/>
<rect x="88" y="577" width="5" height="10" fill="#eee" stroke="#888" stroke-width=".7"/>
<text x="101" y="585" style="fill:#555;font-size:8.400px">Слои</text>
<!-- rows -->
<rect y="591" width="166" height="12" fill="#dcdcdc"/>
<path d="M0 590.500H976M0 603.500H976" stroke="#444" stroke-width=".7" stroke-dasharray="2 1.500"/>
<path d="M975.500 590V604M1 591V603" stroke="#555" stroke-dasharray="1.500 1.500" stroke-width=".7"/>
<ellipse cx="7" cy="597" rx="4" ry="2.500" fill="#c8c8c8" stroke="#bbb"/>
<text x="30" y="600" style="fill:#555;font-size:8.400px">Нало...</text>
<path d="M63 596L66 599L69 596" fill="none" stroke="#bbb"/>
<path d="M71 597H73L75 592L77 602L79 594L81 597" fill="none" stroke="#aaa"/>
<rect x="85" y="592" width="4.500" height="10" fill="none" stroke="#777" stroke-width=".7"/><path d="M91 595H95L93 597Z" fill="#c02040"/>
<text x="101" y="600" style="fill:#555;font-size:8.400px">Слой 2</text>
<ellipse cx="7" cy="614" rx="4" ry="2.500" fill="#f4f4f4" stroke="#bbb"/>
<text x="30" y="618" style="fill:#555;font-size:8.400px">Нало...</text>
<path d="M63 613L66 616L69 613" fill="none" stroke="#bbb"/>
<path d="M71 615H73L75 609L77 620L79 611L81 615" fill="none" stroke="#aaa"/>
<rect x="85" y="610" width="4.500" height="10" fill="none" stroke="#777" stroke-width=".7"/><path d="M91 613H95L93 615Z" fill="#c02040"/>
<text x="101" y="618" style="fill:#555;font-size:8.400px">Слой 1</text>
<path d="M0 624.500H976" stroke="#ddd"/><path d="M15.500 604V665M28.500 604V665M70.500 604V665M96.500 604V665M165.500 555V678" stroke="#e0e0e0"/>
<!-- clip -->
<rect x="172" y="593" width="121" height="10" fill="#b6c58e"/>
<text x="186" y="601" style="font-size:8.400px;fill:#444">Текст 1</text>
<path d="M174 594H180M177 594V602" stroke="#555"/><path d="M180 595V603" stroke="#444" stroke-dasharray="1 1"/>
<!-- strip -->
<rect x="176" y="605" width="799" height="18" fill="url(#thumb)"/>
<g>
<rect x="245" y="606" width="24" height="17" fill="#1d3a6e"/><rect x="250" y="610" width="14" height="2" fill="#8ab"/><rect x="253" y="614" width="6" height="3" fill="#cde"/>
<rect x="280" y="606" width="23" height="17" fill="#1f4080"/><rect x="284" y="606" width="14" height="4" fill="#8fb0d8"/>
<rect x="315" y="606" width="23" height="17" fill="#20386c"/><rect x="318" y="611" width="17" height="1.500" fill="#abc"/><rect x="318" y="616" width="17" height="1.500" fill="#abc"/>
<rect x="478" y="606" width="22" height="17" fill="#3a3030"/><rect x="480" y="613" width="20" height="10" fill="#b8cccc"/><circle cx="492" cy="610" r="3.500" fill="#b89078"/>
<rect x="500" y="606" width="25" height="17" fill="#2a2222"/>
<rect x="613" y="606" width="23" height="17" fill="#f6f6f6"/>
<rect x="648" y="606" width="25" height="17" fill="#f2f2f2"/><rect x="652" y="609" width="16" height="1.500" fill="#555"/><rect x="650" y="612" width="20" height="8" fill="#ddd"/>
<rect x="684" y="606" width="26" height="17" fill="#ececec"/><rect x="688" y="609" width="16" height="1.500" fill="#555"/><rect x="686" y="612" width="22" height="8" fill="#d4d4d4"/>
<rect x="817" y="606" width="25" height="17" fill="#f2f2f2"/><rect x="821" y="609" width="16" height="1.500" fill="#555"/><rect x="819" y="612" width="20" height="8" fill="#ddd"/>
<rect x="753" y="606" width="20" height="17" fill="#4a3230"/>
<rect x="950" y="606" width="25" height="17" fill="#3a2820"/><path d="M950 623V615L958 612H968L975 616V623Z" fill="#b8d0d0"/><circle cx="963" cy="609" r="4" fill="#c09880"/>
</g>
<path d="M176 623L174 619H178Z" fill="#a01830"/><circle cx="176" cy="620" r="2.500" fill="#a01830"/>
<!-- playhead -->
<path d="M579.500 566V665" stroke="#b83a58" stroke-width="1"/>
<path d="M576 564H584V570L580 574L576 570Z" fill="#7aa8d8"/>
<!-- h scroll -->
<rect y="672" width="978" height="6" fill="#e8e8e8"/><path d="M4 675L7 672.500V677.500Z" fill="#666"/>
<rect x="443" y="672" width="3" height="6" fill="#bbb"/><rect y="677.500" width="978" height="1" fill="#aaa"/>

<!-- status -->
<rect y="678" width="1152" height="14" fill="#3f3f3f"/>
<rect x="980" y="672" width="172" height="6" fill="#4a4a4a"/>
<path d="M676.500 680V690M716.500 680V690M768.500 680V690M836.500 680V690M887.500 680V690M955.500 680V690" stroke="#ddd" stroke-width=".8"/>
<text x="679" y="689" class="st" textLength="35" lengthAdjust="spacingAndGlyphs">Позиция:</text><text x="721" y="689" class="st" textLength="43" lengthAdjust="spacingAndGlyphs">00:06:33.166</text>
<text x="771" y="689" class="st" textLength="62" lengthAdjust="spacingAndGlyphs">Нач. выделения:</text><text x="840" y="689" class="st" textLength="43" lengthAdjust="spacingAndGlyphs">00:00:00.000</text>
<text x="890" y="689" class="st" textLength="63" lengthAdjust="spacingAndGlyphs">Кон. выделения:</text><text x="959" y="689" class="st" textLength="43" lengthAdjust="spacingAndGlyphs">00:00:00.000</text>
<path d="M1010.500 680V690" stroke="#eee" stroke-width="1.200"/>
<g fill="#1ec0a8"><path d="M1021 679L1023 682H1019Z"/><path d="M1021 691L1023 688H1019Z"/><path d="M1015 685L1018 683V687Z"/><path d="M1027 685L1024 683V687Z"/></g>
<text x="1040" y="689" class="st">70%</text>
<circle cx="1068" cy="685" r="4" fill="#999"/><path d="M1066 685H1070" stroke="#333"/>
<path d="M1072 685H1142" stroke="#666"/><rect x="1095" y="681" width="4" height="8" fill="#bbb"/>
<circle cx="1146" cy="685" r="4" fill="#999"/><path d="M1144 685H1148M1146 683V687" stroke="#333"/>

<!-- taskbar -->
<rect y="692" width="1152" height="28" fill="#6a2b40"/>
<path d="M9 698.500L16 697.500V705H9ZM17 697.300L26 696V705H17ZM9 706H16V713.500L9 712.500ZM17 706H26V715L17 713.700Z" fill="#f4f4f4"/>
<g fill="#ffffff" fill-opacity=".1"><rect x="36" y="693" width="39" height="27"/><rect x="78" y="693" width="39" height="27"/><rect x="163" y="693" width="39" height="27"/><rect x="206" y="693" width="36" height="27"/><rect x="248" y="693" width="40" height="27"/><rect x="291" y="693" width="39" height="27"/></g>
<rect x="333" y="693" width="39" height="27" fill="#ffffff" fill-opacity=".3"/>
<rect x="48" y="698" width="15" height="19" rx="1" fill="#9cc8de"/><rect x="50" y="700" width="11" height="4" fill="#d8eef8"/><g fill="#5a8cb0"><rect x="50" y="706" width="3" height="2"/><rect x="54" y="706" width="3" height="2"/><rect x="58" y="706" width="3" height="2"/><rect x="50" y="710" width="3" height="2"/><rect x="54" y="710" width="3" height="2"/><rect x="58" y="710" width="3" height="2"/></g>
<path d="M88 701H96L98 699H107V704H88Z" fill="#e8c868"/><rect x="88" y="703" width="20" height="11" fill="#f4dc8c"/><rect x="92" y="712" width="13" height="5" fill="#38a8d8"/><rect x="94" y="708" width="9" height="4" fill="#88c8e0"/>
<circle cx="140" cy="706" r="10" fill="#1a2a68" stroke="#e8e8f0" stroke-width="1.500"/><path d="M137 704V701Q140 697 143 701V704" fill="none" stroke="#d8d8e8" stroke-width="1.300"/><rect x="135" y="704" width="10" height="8" rx="1" fill="#888aa8"/><rect x="136" y="707" width="8" height="1" fill="#223"/>
<circle cx="181" cy="707" r="9.500" fill="#f0642a"/><path d="M174 700Q172 708 179 715Q190 716 191 705Q190 697 184 696Q187 702 182 702Q176 700 174 700Z" fill="#f59a22"/><circle cx="182" cy="707" r="4.500" fill="#5a3ab8"/><path d="M178 703Q182 701 185 704L181 706Z" fill="#f4b030"/>
<rect x="216" y="697" width="16" height="21" fill="#33a038"/><rect x="218" y="702" width="12" height="14" fill="#f6f6f6"/><g fill="#38a040"><rect x="220" y="707" width="8" height="7"/></g><path d="M220 709.500H228M220 712H228M224 707V714" stroke="#f6f6f6" stroke-width=".8"/><path d="M226 697H232V703Z" fill="#1f7a28"/>
<rect x="262" y="698" width="14" height="18" fill="#f4f4f4"/><path d="M266 701H275M266 704H275M266 707H275M266 710H275M266 713H275" stroke="#2a5aa0" stroke-width="1"/><rect x="258" y="700" width="12" height="14" fill="#1c4a98"/><text x="264" y="710.500" class="c" style="font-size:9px;font-weight:bold;fill:#fff">W</text>
<circle cx="310" cy="706" r="9.500" fill="#2c2226" stroke="#e4e4e4" stroke-width="1.300"/><path d="M305 703A5 5 0 0 1 315 703M307 712A5 5 0 0 0 316 708M304 708A5 5 0 0 0 308 712" fill="none" stroke="#ddd" stroke-width="1.300"/>
<rect x="343" y="696" width="20" height="22" fill="#0c4a4a"/><path d="M346 699L356 708L346 717Z" fill="#20d8c0"/><path d="M352 699H361V706Z" fill="#109c90"/><path d="M352 717L361 708V717Z" fill="#0e7a78"/><rect x="356" y="698" width="5" height="5" fill="none" stroke="#9fe" stroke-width=".7"/>

<!-- tray -->
<rect x="811" y="700" width="19" height="12" fill="#e8e8e8" stroke="#222"/><path d="M813 703H828M813 706H828M813 709H828M815 701V711M818 701V711M821 701V711M824 701V711" stroke="#333" stroke-width=".6"/>
<rect x="841" y="701" width="9" height="11" rx="1" fill="#e83838"/><circle cx="845.500" cy="706" r="1.500" fill="#fff"/>
<circle cx="861" cy="706" r="6" fill="#1a1a1a"/><circle cx="860" cy="708" r="3" fill="#c0102a"/>
<path d="M871 711L878 701M874 712L881 704" stroke="#3cb04c" stroke-width="1.500"/>
<circle cx="895" cy="707" r="4.500" fill="#c88a40"/><path d="M891 703L895 707L898 703" fill="#4a9ad0"/>
<rect x="907" y="701" width="3" height="5" fill="#bbb"/><rect x="909" y="706" width="7" height="6" fill="#28a8c0"/>
<rect x="923" y="701" width="11" height="11" fill="#3a90d0"/><path d="M926 704H931V709" stroke="#fff" fill="none"/>
<path d="M940 702H949V708H940ZM944.500 708V712M941 712H948" fill="none" stroke="#ddd"/>
<rect x="956" y="700" width="11" height="13" rx="2" fill="#c090a8"/><text x="961.500" y="710" class="c" style="font-size:8px;fill:#fff">S</text>
<path d="M973 708Q973 703 977 703Q981 703 981 708H983V711H971V708Z" fill="#d8d8d8"/>
<path d="M991 702L998 703V708L994.500 712L991 708Z" fill="#18a070"/><path d="M993 706L995 708L997 704" stroke="#fff" fill="none"/>
<path d="M1006 703L1010 701L1014 703L1010 705ZM1006 707L1010 705L1014 707L1010 709Z" fill="#eee"/>
<path d="M1022 706L1028 701V712Z" fill="#d84848"/>
<path d="M1038 701V713" stroke="#eee" stroke-width="1.200"/><path d="M1039 702H1046L1044 705L1046 708H1039Z" fill="#eee"/>
<path d="M1056 704H1058L1061 701V712L1058 709H1056Z" fill="#eee"/><path d="M1063 704Q1065 706.500 1063 709" fill="none" stroke="#eee"/>
<text x="1075" y="710" style="font-size:9px;fill:#ddd">РУС</text>
<text x="1122" y="705" class="c" style="font-size:8.600px;fill:#ddd">18:38</text>
<text x="1122" y="716" class="c" style="font-size:8.600px;fill:#ddd">07.04.2020</text>

<!-- pillar box -->
<rect x="1152" width="128" height="720" fill="#000"/>
</svg>
</body></html>
